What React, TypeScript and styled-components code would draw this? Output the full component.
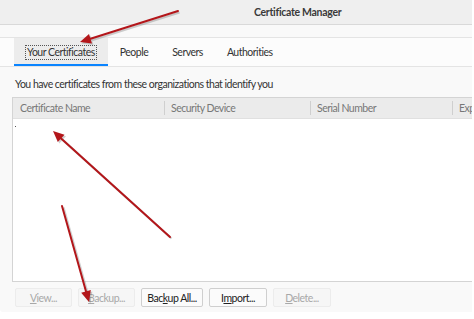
import React from "react";
import styled, { createGlobalStyle } from "styled-components";

const GlobalStyle = createGlobalStyle`
  html, body { margin: 0; padding: 0; background: #ffffff; }
  body { font-family: Lato, "Noto Sans", sans-serif; }
`;

const Page = styled.div`
  position: relative;
  width: 474px;
  height: 319px;
  overflow: hidden;
  background: #ffffff;
`;

const Window = styled.div`
  width: 472px;
  height: 312px;
  background: #f9f9f9;
  border-bottom-left-radius: 3px;
  display: flex;
  flex-direction: column;
  overflow: hidden;
`;

const TitleBar = styled.div`
  height: 25px;
  flex: none;
  background: #efefef;
  border-bottom: 1px solid #d9d9d9;
  box-sizing: border-box;
  display: flex;
  align-items: center;
  padding-left: 254px;
  font-size: 10.5px;
  font-weight: 700;
  letter-spacing: -0.3px;
  color: #3a3a3a;
  white-space: nowrap;
`;

const Body = styled.div`
  display: flex;
  flex-direction: column;
  padding: 12px 0 0 12px;
  width: 600px;
  letter-spacing: -0.5px;
`;

const TabStrip = styled.div`
  display: flex;
  height: 28px;
  background: #fcfcfc;
  border-top: 1px solid #e4e4e4;
  border-bottom: 1px solid #e4e4e4;
  margin-left: -12px;
  padding-left: 14px;
`;

const Tab = styled.div<{ $active?: boolean }>`
  display: flex;
  align-items: center;
  justify-content: center;
  box-sizing: border-box;
  height: 28px;
  padding: 2px 12px 0;
  font-size: 10.5px;
  color: #333;
  white-space: nowrap;
  background: ${(p) => (p.$active ? "#ececec" : "transparent")};
  border-bottom: 2px solid ${(p) => (p.$active ? "#0a84ff" : "transparent")};
`;

const FocusLabel = styled.span<{ $focus?: boolean }>`
  outline: ${(p) => (p.$focus ? "1px dotted #555" : "none")};
  padding: 0 1px;
  line-height: 13px;
`;

const Description = styled.div`
  font-size: 10.5px;
  color: #333;
  margin: 9px 0 0 3px;
  height: 16px;
  line-height: 16px;
  white-space: nowrap;
`;

const Table = styled.div`
  margin-top: 5px;
  height: 183px;
  border: 1px solid #d4d4d4;
  background: #ffffff;
  display: flex;
  flex-direction: column;
`;

const HeaderRow = styled.div`
  display: flex;
  height: 20px;
  background: #ebebeb;
  border-bottom: 1px solid #e0e0e0;
`;

const HeaderCell = styled.div<{ $w: number; $first?: boolean }>`
  width: ${(p) => p.$w}px;
  flex: none;
  box-sizing: border-box;
  display: flex;
  align-items: center;
  font-size: 10.5px;
  color: #777;
  padding-left: 7px;
  position: relative;
  white-space: nowrap;
  &::before {
    content: "";
    display: ${(p) => (p.$first ? "none" : "block")};
    position: absolute;
    left: 0;
    top: 3px;
    bottom: 3px;
    width: 1px;
    background: #cfcfcf;
  }
`;

const RowDot = styled.div`
  width: 1px;
  height: 1px;
  background: #555;
  margin: 7px 0 0 2px;
`;

const ButtonRow = styled.div`
  display: flex;
  gap: 6px;
  margin: 6px 0 0 3px;
`;

const Button = styled.div<{ $disabled?: boolean; $w: number }>`
  width: ${(p) => p.$w}px;
  height: 19px;
  box-sizing: border-box;
  display: flex;
  align-items: center;
  justify-content: center;
  font-size: 10.5px;
  white-space: nowrap;
  color: ${(p) => (p.$disabled ? "#a8a8a8" : "#222")};
  background: ${(p) => (p.$disabled ? "#f6f6f6" : "#fbfbfb")};
  border: 1px solid ${(p) => (p.$disabled ? "#ececec" : "#cfcfcf")};
  border-radius: 2px;
  u { text-decoration: underline; text-underline-offset: 1px; }
`;

const Overlay = styled.svg`
  position: absolute;
  left: 0;
  top: 0;
  width: 474px;
  height: 319px;
  pointer-events: none;
`;

type ArrowProps = { x1: number; y1: number; x2: number; y2: number };

const Arrow: React.FC<ArrowProps> = ({ x1, y1, x2, y2 }) => {
  const ang = Math.atan2(y2 - y1, x2 - x1);
  const len = 11;
  const half = 5;
  const bx = x2 - len * Math.cos(ang);
  const by = y2 - len * Math.sin(ang);
  const px = -Math.sin(ang) * half;
  const py = Math.cos(ang) * half;
  const head = `${x2},${y2} ${bx + px},${by + py} ${bx - px},${by - py}`;
  return (
    <g>
      <g transform="translate(1.5,1.5)" opacity="0.35">
        <line x1={x1} y1={y1} x2={bx} y2={by} stroke="#777" strokeWidth="2.2" />
        <polygon points={head} fill="#777" />
      </g>
      <line x1={x1} y1={y1} x2={bx} y2={by} stroke="#b3161a" strokeWidth="2" strokeLinecap="round" />
      <polygon points={head} fill="#b3161a" />
    </g>
  );
};

export default function App() {
  return (
    <>
      <GlobalStyle />
      <Page>
        <Window>
          <TitleBar>Certificate Manager</TitleBar>
          <Body>
            <TabStrip>
              <Tab $active>
                <FocusLabel $focus>Your Certificates</FocusLabel>
              </Tab>
              <Tab>People</Tab>
              <Tab>Servers</Tab>
              <Tab>Authorities</Tab>
            </TabStrip>
            <Description>You have certificates from these organizations that identify you</Description>
            <Table>
              <HeaderRow>
                <HeaderCell $w={151} $first>Certificate Name</HeaderCell>
                <HeaderCell $w={146}>Security Device</HeaderCell>
                <HeaderCell $w={142}>Serial Number</HeaderCell>
                <HeaderCell $w={140}>Expires On</HeaderCell>
              </HeaderRow>
              <RowDot />
            </Table>
            <ButtonRow>
              <Button $disabled $w={57}><span><u>V</u>iew...</span></Button>
              <Button $disabled $w={57}><span><u>B</u>ackup...</span></Button>
              <Button $w={62}><span>Bac<u>k</u>up All...</span></Button>
              <Button $w={58}><span>I<u>m</u>port...</span></Button>
              <Button $disabled $w={58}><span><u>D</u>elete...</span></Button>
            </ButtonRow>
          </Body>
        </Window>
        <Overlay viewBox="0 0 474 319">
          <Arrow x1={178} y1={11} x2={80} y2={42} />
          <Arrow x1={170} y1={237} x2={53} y2={131} />
          <Arrow x1={62} y1={206} x2={89} y2={302} />
        </Overlay>
      </Page>
    </>
  );
}
